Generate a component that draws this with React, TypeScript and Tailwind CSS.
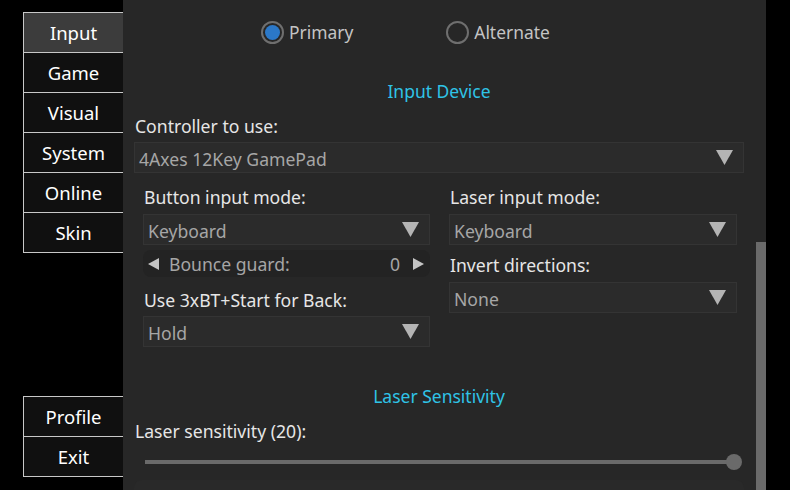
import React from "react";

const font = { fontFamily: '"Noto Sans", "Open Sans", sans-serif' };

function Caret() {
  return (
    <svg width="17" height="15" viewBox="0 0 17 15" className="shrink-0">
      <path d="M0 0 H17 L8.5 15 Z" fill="#b4b4b4" />
    </svg>
  );
}

function Arrow({ dir }: { dir: "left" | "right" }) {
  return (
    <svg width="11" height="12" viewBox="0 0 11 12" className="shrink-0">
      <path d={dir === "left" ? "M11 0 V12 L0 6 Z" : "M0 0 V12 L11 6 Z"} fill="#c4c4c4" />
    </svg>
  );
}

function Dropdown({ value, className = "" }: { value: string; className?: string }) {
  return (
    <div
      className={`flex h-[31px] items-center justify-between border border-[#343434] bg-[#2b2b2b] pl-[4px] pr-[10px] text-[17.6px] text-[#a6a6a6] ${className}`}
    >
      <span className="pt-[3px]">{value}</span>
      <Caret />
    </div>
  );
}

function Label({ children, className = "" }: { children: React.ReactNode; className?: string }) {
  return <div className={`h-[24px] text-[17.6px] leading-[24px] text-[#e6e6e6] ${className}`}>{children}</div>;
}

function Header({ children, className = "" }: { children: React.ReactNode; className?: string }) {
  return <div className={`text-center text-[17.5px] leading-[24px] text-[#2fc3e6] ${className}`}>{children}</div>;
}

function Radio({ label, checked }: { label: string; checked?: boolean }) {
  return (
    <div className="flex items-center gap-[5px]">
      <div className="flex h-[23px] w-[23px] items-center justify-center rounded-full border-2 border-[#6f6f6f]">
        {checked && <div className="h-[15px] w-[15px] rounded-full bg-[#2b78c8]" />}
      </div>
      <span className="text-[17.4px] leading-[24px] text-[#c4c4c4]">{label}</span>
    </div>
  );
}

const tabs = ["Input", "Game", "Visual", "System", "Online", "Skin"];

export default function App() {
  return (
    <div className="flex h-[490px] w-[790px] overflow-hidden bg-black" style={font}>
      {/* Sidebar */}
      <div className="flex w-[123px] shrink-0 flex-col pl-[23px] pt-[12px] pb-[13px]">
        <div className="flex flex-col border-l border-t border-[#c8c8c8]">
          {tabs.map((t, i) => (
            <div
              key={t}
              className={`flex h-[40px] items-center justify-center border-b border-[#c8c8c8] text-[18.5px] text-white ${
                i === 0 ? "bg-[#3c3c3c]" : "bg-[#101010]"
              }`}
            >
              {t}
            </div>
          ))}
        </div>
        <div className="flex-1" />
        <div className="flex flex-col border-l border-t border-[#c8c8c8]">
          {["Profile", "Exit"].map((t) => (
            <div
              key={t}
              className="flex h-[40px] items-center justify-center border-b border-[#c8c8c8] bg-[#101010] text-[18.5px] text-white"
            >
              {t}
            </div>
          ))}
        </div>
      </div>

      {/* Main panel */}
      <div className="flex w-[643px] shrink-0 bg-[#272727]">
        <div className="flex-1 pl-[11px] pr-[12px]">
          {/* Radio row */}
          <div className="mt-[20px] flex h-[24px] items-center pl-[127px]">
            <Radio label="Primary" checked />
            <div className="w-[93px]" />
            <Radio label="Alternate" />
          </div>

          <Header className="mt-[35px]">Input Device</Header>

          <Label className="mt-[11px] pl-[1px]">Controller to use:</Label>
          <Dropdown value="4Axes 12Key GamePad" className="mt-[4px]" />

          <div className="mt-[12px] grid grid-cols-[287px_288px] gap-x-[19px] pl-[9px]">
            <div className="flex flex-col">
              <Label className="pl-[1px]">Button input mode:</Label>
              <Dropdown value="Keyboard" className="mt-[5px]" />
              <div className="mt-[5px] flex h-[27px] items-center rounded-lg bg-[#232323] pl-[5px] pr-[6px] text-[17.6px] text-[#a6a6a6]">
                <Arrow dir="left" />
                <span className="ml-[10px] pt-[2px]">Bounce guard:</span>
                <span className="ml-auto pt-[2px]">0</span>
                <span className="ml-[13px] flex">
                  <Arrow dir="right" />
                </span>
              </div>
              <Label className="mt-[11px] pl-[1px]">Use 3xBT+Start for Back:</Label>
              <Dropdown value="Hold" className="mt-[4px]" />
            </div>
            <div className="flex flex-col">
              <Label className="pl-[1px]">Laser input mode:</Label>
              <Dropdown value="Keyboard" className="mt-[5px]" />
              <Label className="mt-[8px] pl-[1px]">Invert directions:</Label>
              <Dropdown value="None" className="mt-[5px]" />
            </div>
          </div>

          <Header className="mt-[37px]">Laser Sensitivity</Header>

          <Label className="mt-[11px] pl-[1px]">Laser sensitivity (20):</Label>

          <div className="mt-[11px] flex items-center pl-[11px] pr-[2px]">
            <div className="h-[4px] flex-1 bg-[#6a6a6a]" />
            <div className="-ml-[8px] h-[16px] w-[16px] rounded-full bg-[#6a6a6a]" />
          </div>

          <div className="mt-[10px] h-[20px] rounded-t-lg bg-[#292929]" />
        </div>

        {/* Scrollbar */}
        <div className="flex w-[10px] shrink-0 flex-col">
          <div className="mt-[242px] flex-1 bg-[#6a6a6a]" />
        </div>
      </div>
    </div>
  );
}
